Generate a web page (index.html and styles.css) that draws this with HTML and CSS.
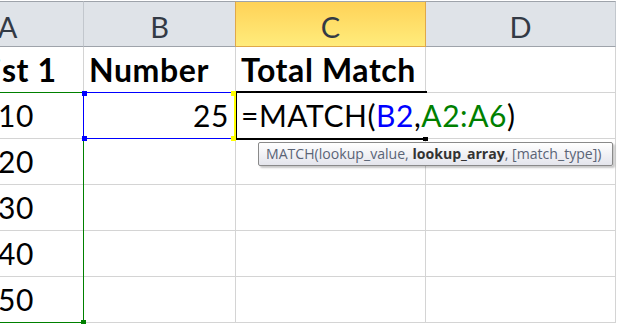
FILE: index.html
```html
<!DOCTYPE html>
<html>
<head>
<meta charset="utf-8">
<link rel="stylesheet" href="styles.css">
</head>
<body>
<div class="sheet">
  <div class="grid">
    <div class="hdr">A</div>
    <div class="hdr hdr-before-active">B</div>
    <div class="hdr hdr-active">C</div>
    <div class="hdr">D</div>

    <div class="cell cell-a cell-a-title bold">List 1</div>
    <div class="cell bold">Number</div>
    <div class="cell bold">Total Match</div>
    <div class="cell"></div>

    <div class="cell cell-a">10</div>
    <div class="cell num">25</div>
    <div class="cell cell-overflow"><span>=MATCH(</span><span class="ref-blue">B2</span><span>,</span><span class="ref-green">A2:A6</span><span>)</span></div>
    <div class="cell"></div>

    <div class="cell cell-a">20</div>
    <div class="cell"></div>
    <div class="cell"></div>
    <div class="cell"></div>

    <div class="cell cell-a">30</div>
    <div class="cell"></div>
    <div class="cell"></div>
    <div class="cell"></div>

    <div class="cell cell-a">40</div>
    <div class="cell"></div>
    <div class="cell"></div>
    <div class="cell"></div>

    <div class="cell cell-a">50</div>
    <div class="cell"></div>
    <div class="cell"></div>
    <div class="cell"></div>
  </div>

  <div class="range-green"><span class="handle handle-green-br"></span></div>
  <div class="edit-cell"><span class="handle handle-black-br"></span></div>
  <div class="range-blue">
    <span class="handle handle-blue-tl"></span>
    <span class="handle handle-blue-bl"></span>
    <span class="handle handle-yellow-tr"></span>
    <span class="handle handle-yellow-br"></span>
  </div>

  <div class="tooltip">MATCH(lookup_value, <b>lookup_array</b>, [match_type])</div>
</div>
</body>
</html>
```

FILE: styles.css
```css
* { box-sizing: border-box; }
html, body { margin: 0; padding: 0; background: #ffffff; }
body { width: 617px; height: 324px; overflow: hidden; }

.sheet {
  position: relative;
  width: 617px;
  height: 324px;
  overflow: hidden;
  background: #ffffff;
  font-family: Lato, "Liberation Sans", sans-serif;
}

.grid {
  display: grid;
  grid-template-columns: 152px 152px 190px 190px;
  grid-auto-rows: 46px;
  margin-left: -68px;
  margin-top: 1px;
  width: 684px;
}

.hdr {
  background: #dfe3e8;
  border-top: 1px solid #9ea3aa;
  border-bottom: 1px solid #9ea3aa;
  border-right: 1px solid #c2c7cd;
  color: #333a45;
  font-size: 29px;
  display: flex;
  align-items: center;
  justify-content: center;
  padding-top: 4px;
}
.hdr-before-active { border-right-color: #e0a849; }
.hdr-active {
  background: linear-gradient(#ffd257, #ffec7c);
  border-right-color: #e0a849;
  border-bottom-color: #e0a849;
}

.cell {
  border-right: 1px solid #d4d4d4;
  border-bottom: 1px solid #d4d4d4;
  font-size: 30px;
  letter-spacing: 0.55px;
  line-height: 45px;
  padding: 0 5px 0 5px;
  white-space: nowrap;
  color: #000000;
}
.bold { font-weight: 700; font-size: 32px; letter-spacing: 0.6px; }
.num { text-align: right; padding-right: 6px; }
.cell-a { padding-left: 66px; }
.cell-a-title { padding-left: 44px; }
.cell-overflow { overflow: visible; border-right-color: #ffffff; position: relative; z-index: 1; }
.ref-blue { color: #0000ff; }
.ref-green { color: #008000; }

.range-green {
  position: absolute;
  left: -10px;
  top: 92px;
  width: 94px;
  height: 231px;
  border: 1px solid #008000;
  z-index: 2;
}
.range-blue {
  position: absolute;
  left: 83px;
  top: 92px;
  width: 153px;
  height: 47px;
  border-top: 1px solid #0000ff;
  border-left: 1px solid #0000ff;
  border-bottom: 1px solid #0000ff;
  border-right: 2px solid #ffff00;
  z-index: 4;
}
.edit-cell {
  position: absolute;
  left: 236px;
  top: 91px;
  width: 191px;
  height: 49px;
  border-top: 2px solid #000000;
  border-bottom: 2px solid #000000;
  border-left: 1px solid #000000;
  z-index: 3;
}

.handle { position: absolute; width: 5px; height: 5px; }
.handle-green-br { right: -3px; bottom: -3px; background: #008000; }
.handle-black-br { right: -1px; bottom: -3px; width: 5px; height: 4px; background: #000000; }
.handle-blue-tl { left: -2px; top: -2px; background: #0000ff; }
.handle-blue-bl { left: -2px; bottom: -3px; background: #0000ff; }
.handle-yellow-tr { right: -2px; top: -2px; background: #ffff00; }
.handle-yellow-br { right: -2px; bottom: -3px; background: #ffff00; }

.tooltip {
  position: absolute;
  left: 258px;
  top: 142px;
  width: 355px;
  height: 24px;
  border: 1px solid #8a8a8a;
  border-radius: 2px;
  background: linear-gradient(#ffffff, #e4e5ec);
  box-shadow: 2px 2px 2px rgba(0, 0, 0, 0.22);
  font-family: "Open Sans", "Noto Sans", sans-serif;
  font-size: 14.1px;
  line-height: 22px;
  padding-left: 7px;
  color: #5a6476;
  white-space: nowrap;
  z-index: 5;
}
.tooltip b { color: #333333; font-weight: 700; }
```
